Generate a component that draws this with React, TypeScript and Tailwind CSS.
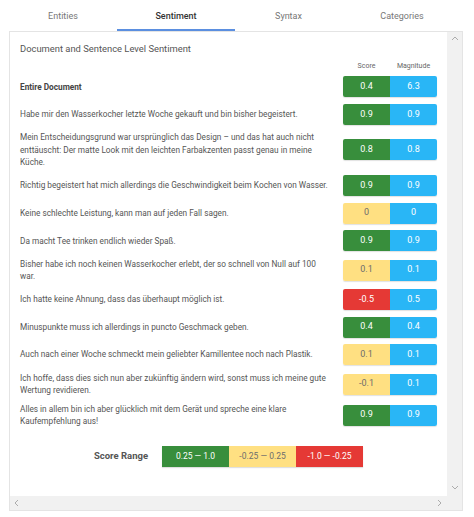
import React from "react";

type Row = { text: string; score: string; magnitude: string; bold?: boolean };

const rows: Row[] = [
  { text: "Entire Document", score: "0.4", magnitude: "6.3", bold: true },
  { text: "Habe mir den Wasserkocher letzte Woche gekauft und bin bisher begeistert.", score: "0.9", magnitude: "0.9" },
  {
    text: "Mein Entscheidungsgrund war ursprünglich das Design – und das hat auch nicht enttäuscht: Der matte Look mit den leichten Farbakzenten passt genau in meine Küche.",
    score: "0.8",
    magnitude: "0.8",
  },
  { text: "Richtig begeistert hat mich allerdings die Geschwindigkeit beim Kochen von Wasser.", score: "0.9", magnitude: "0.9" },
  { text: "Keine schlechte Leistung, kann man auf jeden Fall sagen.", score: "0", magnitude: "0" },
  { text: "Da macht Tee trinken endlich wieder Spaß.", score: "0.9", magnitude: "0.9" },
  { text: "Bisher habe ich noch keinen Wasserkocher erlebt, der so schnell von Null auf 100 war.", score: "0.1", magnitude: "0.1" },
  { text: "Ich hatte keine Ahnung, dass das überhaupt möglich ist.", score: "-0.5", magnitude: "0.5" },
  { text: "Minuspunkte muss ich allerdings in puncto Geschmack geben.", score: "0.4", magnitude: "0.4" },
  { text: "Auch nach einer Woche schmeckt mein geliebter Kamillentee noch nach Plastik.", score: "0.1", magnitude: "0.1" },
  { text: "Ich hoffe, dass dies sich nun aber zukünftig ändern wird, sonst muss ich meine gute Wertung revidieren.", score: "-0.1", magnitude: "0.1" },
  { text: "Alles in allem bin ich aber glücklich mit dem Gerät und spreche eine klare Kaufempfehlung aus!", score: "0.9", magnitude: "0.9" },
];

const tabs = [
  { label: "Entities", width: "w-[108px]" },
  { label: "Sentiment", width: "w-[118px]", active: true },
  { label: "Syntax", width: "w-[107px]" },
  { label: "Categories", width: "w-[120px]" },
];

function scoreClass(score: string) {
  const v = parseFloat(score);
  if (v >= 0.25) return "bg-[#388e3c] text-white";
  if (v <= -0.25) return "bg-[#e53935] text-white";
  return "bg-[#ffe082] text-[#6d6d6d]";
}

function Chevron({ dir }: { dir: "up" | "down" | "left" | "right" }) {
  const points = {
    up: "1,5 4,2 7,5",
    down: "1,2 4,5 7,2",
    left: "5,1 2,4 5,7",
    right: "2,1 5,4 2,7",
  }[dir];
  return (
    <svg width="8" height="8" viewBox="0 0 8 8">
      <polyline points={points} fill="none" stroke="#acacac" strokeWidth="1" />
    </svg>
  );
}

export default function App() {
  return (
    <div className="w-[474px] h-[517px] overflow-hidden bg-white font-['Roboto',sans-serif]">
      <div className="flex h-[31px] pl-[9px]">
        {tabs.map((tab) => (
          <div
            key={tab.label}
            className={`${tab.width} flex items-center justify-center pt-[4px] border-b-2 text-[9px] ${
              tab.active ? "border-[#5b8fe0] text-[#333] font-medium" : "border-transparent text-[#777]"
            }`}
          >
            {tab.label}
          </div>
        ))}
      </div>

      <div className="ml-[9px] w-[454px] h-[480px] border border-[#e4e4e4] flex">
        <div className="flex-1 flex flex-col min-w-0">
          <div className="flex-1 overflow-hidden pl-[10px] pr-[10px] pt-[10px]">
            <h2 className="text-[9.4px] leading-[13px] text-[#555]">Document and Sentence Level Sentiment</h2>

            <div className="flex justify-end mt-[7px] text-[7px] leading-[8px] text-[#666]">
              <span className="w-[47px] text-center">Score</span>
              <span className="w-[47px] text-center">Magnitude</span>
            </div>

            <div className="mt-[3px]">
              {rows.map((row) => (
                <div key={row.text} className="flex items-center py-[3.3px]">
                  <div
                    className={`w-[313px] mr-[10px] text-[8.25px] leading-[12.3px] ${
                      row.bold ? "font-bold text-[#444]" : "text-[#555]"
                    }`}
                  >
                    {row.text}
                  </div>
                  <div className="flex h-[21px] rounded-[2px] overflow-hidden shadow-[0_1px_1px_rgba(0,0,0,0.12)] text-[9px]">
                    <div className={`w-[47px] flex items-center justify-center ${scoreClass(row.score)}`}>{row.score}</div>
                    <div className="w-[47px] flex items-center justify-center bg-[#29b6f6] text-white">{row.magnitude}</div>
                  </div>
                </div>
              ))}
            </div>

            <div className="flex items-center justify-center mt-[15px]">
              <span className="text-[9.5px] font-bold text-[#555] mr-[14px]">Score Range</span>
              <div className="flex h-[21px] text-[8.5px] shadow-[0_1px_1px_rgba(0,0,0,0.12)]">
                <div className="w-[67px] flex items-center justify-center bg-[#388e3c] text-white">0.25 — 1.0</div>
                <div className="w-[67px] flex items-center justify-center bg-[#ffe082] text-[#6d6d6d]">-0.25 — 0.25</div>
                <div className="w-[67px] flex items-center justify-center bg-[#e53935] text-white">-1.0 — -0.25</div>
              </div>
            </div>
          </div>

          <div className="h-[14px] bg-[#f1f1f1] flex items-center justify-between px-[3px]">
            <Chevron dir="left" />
            <Chevron dir="right" />
          </div>
        </div>

        <div className="w-[15px] bg-[#f1f1f1] flex flex-col items-center justify-between pt-[3px] pb-[18px]">
          <Chevron dir="up" />
          <Chevron dir="down" />
        </div>
      </div>
    </div>
  );
}
